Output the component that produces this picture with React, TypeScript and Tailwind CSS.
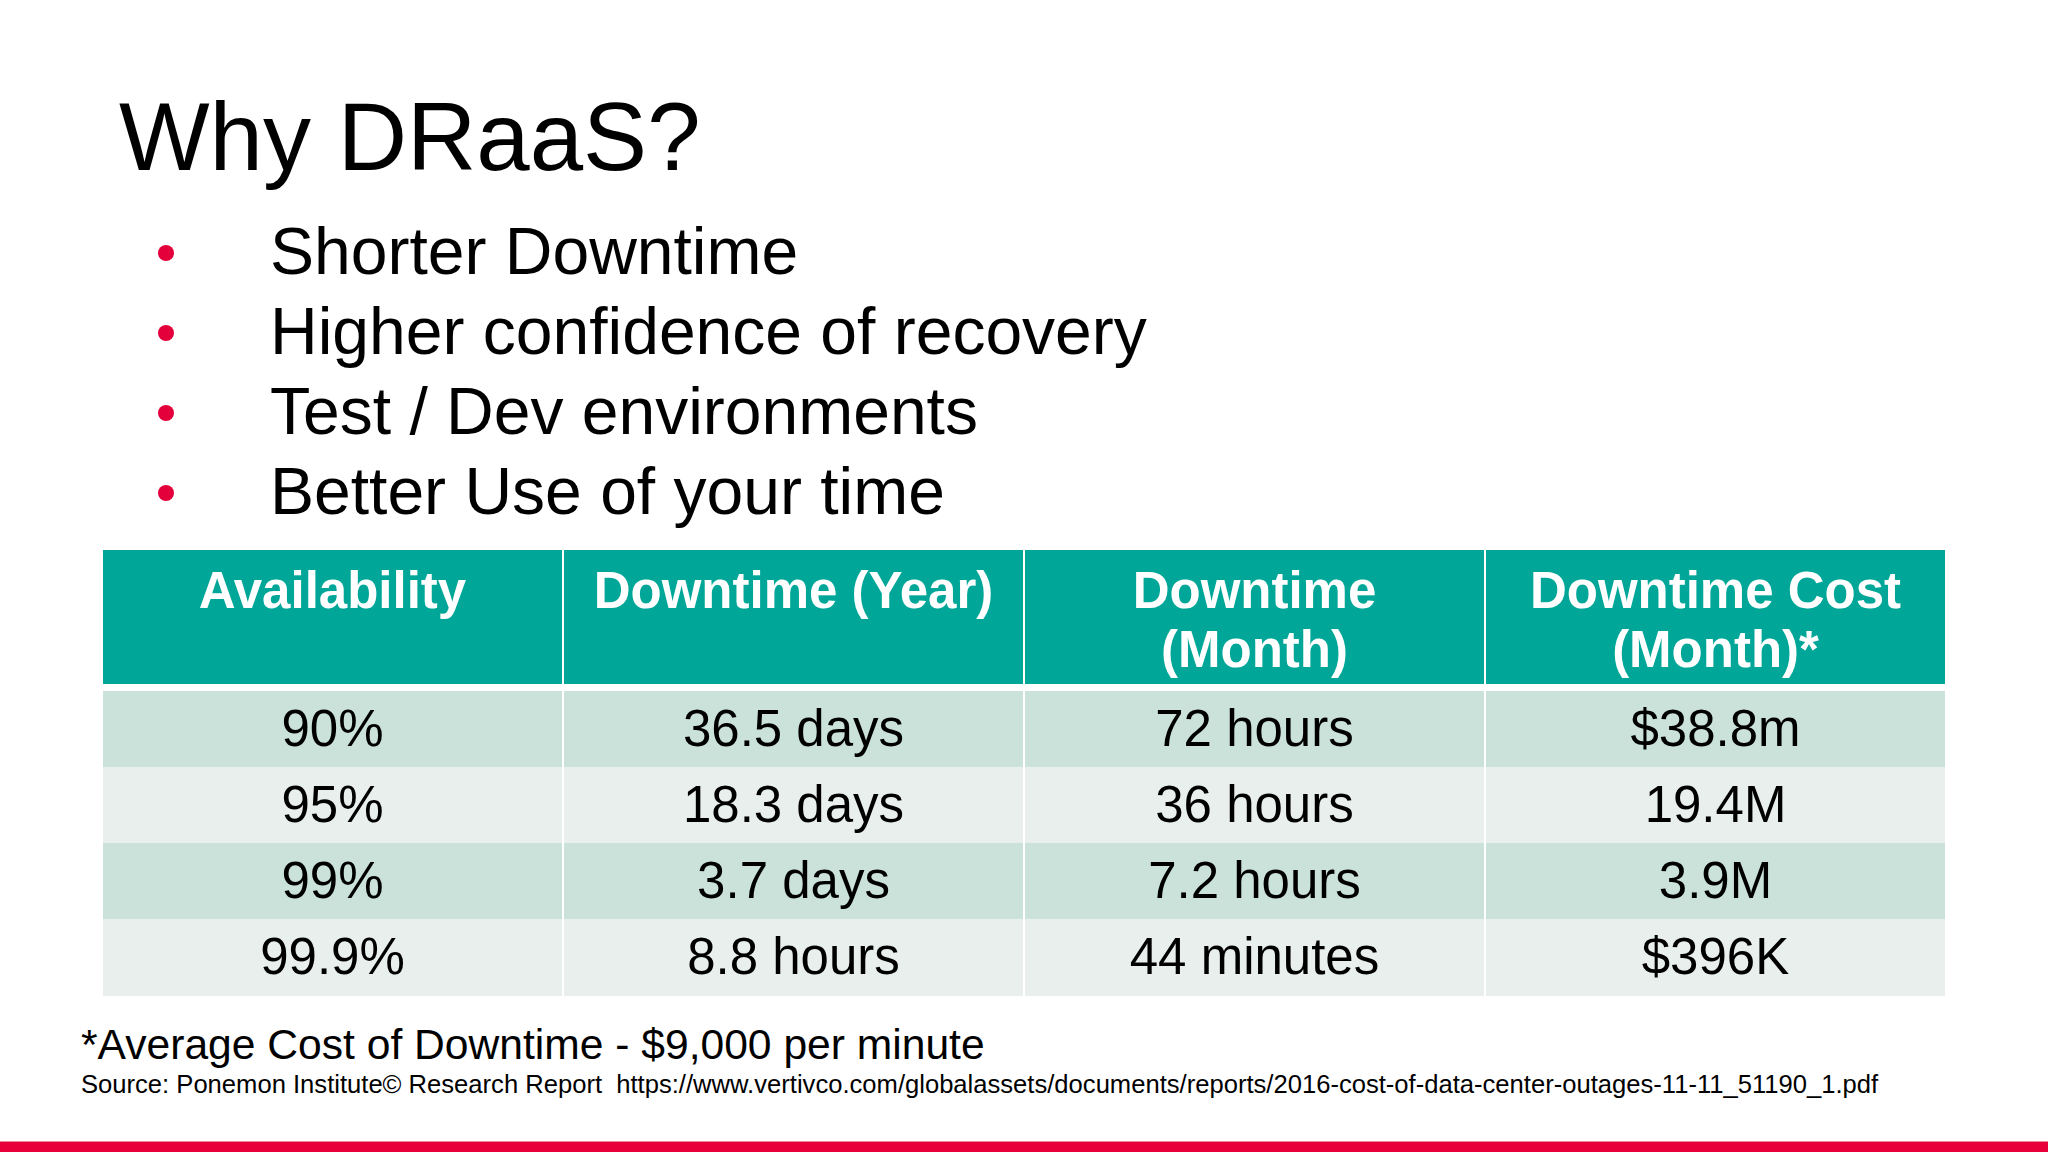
const bullets = [
  'Shorter Downtime',
  'Higher confidence of recovery',
  'Test / Dev environments',
  'Better Use of your time',
]

const headers = [
  ['Availability'],
  ['Downtime (Year)'],
  ['Downtime', '(Month)'],
  ['Downtime Cost', '(Month)*'],
]

const rows = [
  ['90%', '36.5 days', '72 hours', '$38.8m'],
  ['95%', '18.3 days', '36 hours', '19.4M'],
  ['99%', '3.7 days', '7.2 hours', '3.9M'],
  ['99.9%', '8.8 hours', '44 minutes', '$396K'],
]

export default function App() {
  return (
    <div className="w-[2048px] h-[1152px] bg-white flex flex-col font-['Liberation_Sans',Arial,sans-serif] text-black overflow-hidden">
      <h1 className="mt-[89px] ml-[119px] text-[96px] leading-none font-normal">
        Why DRaaS?
      </h1>

      <ul className="mt-[26px] flex flex-col">
        {bullets.map((b) => (
          <li key={b} className="flex items-center h-[80px]">
            <span className="ml-[158px] mt-[4px] w-[16px] h-[16px] rounded-full bg-[#e4003b]" />
            <span className="ml-[96px] text-[66px] leading-[80px]">{b}</span>
          </li>
        ))}
      </ul>

      {/* table */}
      <div className="mt-[19px] ml-[103px] w-[1842px] flex flex-col">
        <div className="grid grid-cols-4 gap-x-[2px] h-[134px]">
          {headers.map((h) => (
            <div
              key={h.join()}
              className="bg-[#00a799] text-white font-bold text-[51px] leading-[59px] text-center pt-[11px]"
            >
              {h.map((line) => (
                <div key={line}>{line}</div>
              ))}
            </div>
          ))}
        </div>
        <div className="mt-[7px] flex flex-col gap-y-[2px]">
          {rows.map((r, i) => (
            <div key={r[0]} className="grid grid-cols-4 gap-x-[2px] h-[74px]">
              {r.map((c, j) => (
                <div
                  key={j}
                  className={`flex items-center justify-center text-[51px] ${
                    i % 2 === 0 ? 'bg-[#cae2da]' : 'bg-[#e8efec]'
                  }`}
                >
                  {c}
                </div>
              ))}
            </div>
          ))}
        </div>
      </div>

      <div className="mt-[30px] ml-[81px] text-[42.6px] leading-none">
        *Average Cost of Downtime - $9,000 per minute
      </div>
      <div className="mt-[6px] ml-[81px] text-[25.6px] leading-none whitespace-pre">
        {'Source: Ponemon Institute© Research Report  https://www.vertivco.com/globalassets/documents/reports/2016-cost-of-data-center-outages-11-11_51190_1.pdf'}
      </div>

      <div className="mt-auto h-[11px] bg-[#e8003a] border-t border-[#f08aa0]" />
    </div>
  )
}
